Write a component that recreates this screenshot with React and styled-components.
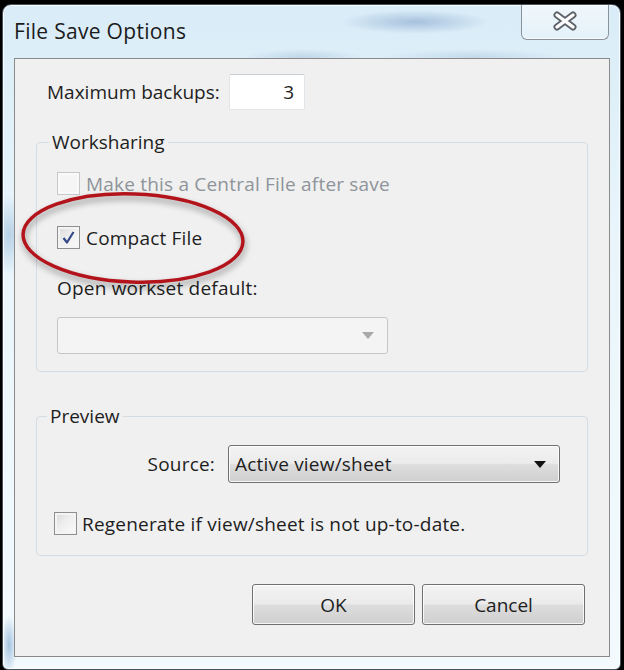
import React from 'react';
import styled, { createGlobalStyle } from 'styled-components';

const GlobalStyle = createGlobalStyle`
  html, body {
    margin: 0;
    padding: 0;
    background: #000;
  }
  body {
    font-family: "Open Sans", "Noto Sans", "DejaVu Sans", sans-serif;
    color: #1e1e1e;
  }
  * {
    box-sizing: border-box;
  }
`;

const Window = styled.div`
  margin: 4px 3px 0 2px;
  height: 666px;
  display: flex;
  flex-direction: column;
  border: 1px solid #46515d;
  border-radius: 9px 9px 6px 6px;
  background:
    radial-gradient(ellipse 75px 12px at 412px 17px, rgba(105, 140, 190, 0.45), transparent),
    radial-gradient(ellipse 60px 8px at 300px 52px, rgba(140, 170, 205, 0.35), transparent),
    radial-gradient(ellipse 90px 8px at 470px 52px, rgba(140, 170, 205, 0.3), transparent),
    radial-gradient(ellipse 18px 40px at 6px 230px, rgba(120, 165, 205, 0.45), transparent),
    radial-gradient(ellipse 8px 30px at 6px 640px, rgba(100, 150, 200, 0.55), transparent),
    linear-gradient(180deg, #d9ecf7 0%, #e9f5fb 35%, #f3fafd 100%);
  box-shadow: inset 0 0 0 1px rgba(255, 255, 255, 0.85);
  overflow: hidden;
`;

const TitleBar = styled.div`
  height: 53px;
  display: flex;
  justify-content: space-between;
  align-items: flex-start;
  padding: 0 11px 0 11px;
`;

const Title = styled.div`
  margin-top: 12px;
  font-size: 21px;
  line-height: 28px;
  letter-spacing: 0.3px;
  color: #1b1b1b;
`;

const CloseButton = styled.div`
  width: 88px;
  height: 36px;
  margin-top: -1px;
  display: flex;
  align-items: center;
  justify-content: center;
  border: 1px solid #8c9299;
  border-top: none;
  border-radius: 0 0 6px 6px;
  background: linear-gradient(180deg, rgba(255, 255, 255, 0.6), rgba(255, 255, 255, 0.25));
  box-shadow: inset 0 -1px 0 rgba(255, 255, 255, 0.7);
  padding-bottom: 2px;
`;

const Client = styled.div`
  position: relative;
  flex: 1;
  margin: 0 10px 12px 11px;
  border: 1px solid #8a8a8a;
  background: #f0f0f0;
  display: flex;
  flex-direction: column;
`;

const Text = styled.span`
  font-size: 19px;
  line-height: 22px;
  letter-spacing: 0.2px;
  white-space: nowrap;
  color: ${(p) => (p.$disabled ? '#8e949a' : '#1e1e1e')};
`;

const BackupsRow = styled.div`
  display: flex;
  align-items: center;
  padding: 15px 0 0 32px;
`;

const BackupsLabel = styled(Text)`
  width: 182px;
  letter-spacing: 0;
`;

const NumberInput = styled.div`
  width: 76px;
  height: 36px;
  padding-right: 10px;
  display: flex;
  align-items: center;
  justify-content: flex-end;
  background: #fff;
  border: 1px solid #e0e5ea;
  border-top-color: #c8ced5;
  border-radius: 2px;
  font-size: 19px;
`;

const Group = styled.fieldset`
  margin: ${(p) => p.$top}px 21px 0 21px;
  padding: 0;
  min-inline-size: 0;
  border: 1px solid #d5dce2;
  border-radius: 4px;
`;

const Legend = styled.legend`
  margin-left: ${(p) => p.$offset}px;
  padding: 0 3px;
  font-size: 19px;
  line-height: 22px;
  color: #1e1e1e;
`;

const GroupBody = styled.div`
  display: flex;
  flex-direction: column;
  align-items: flex-start;
  padding: ${(p) => p.$pad};
`;

const CheckRow = styled.div`
  display: flex;
  align-items: center;
  gap: ${(p) => p.$gap || 6}px;
  height: 23px;
  margin-top: ${(p) => p.$top || 0}px;
  padding-left: ${(p) => p.$indent || 0}px;
`;

const Box = styled.span`
  width: 23px;
  height: 23px;
  flex: none;
  display: flex;
  align-items: center;
  justify-content: center;
  border: 1px solid ${(p) => (p.$disabled ? '#c6c8ca' : '#8f8f8f')};
  background: ${(p) =>
    p.$disabled
      ? '#f5f5f5'
      : 'linear-gradient(135deg, #d9dadb 0%, #eeeeee 45%, #fbfbfb 100%)'};
  box-shadow: inset 0 0 0 2px ${(p) => (p.$disabled ? '#f9f9f9' : '#f4f4f4')};
`;

const FieldLabel = styled(Text)`
  display: block;
  margin-top: ${(p) => p.$top}px;
`;

const Combo = styled.div`
  width: ${(p) => p.$width}px;
  height: ${(p) => p.$height}px;
  margin-top: ${(p) => p.$top || 0}px;
  display: flex;
  align-items: center;
  justify-content: space-between;
  padding: 0 13px 0 6px;
  border-radius: 3px;
  border: 1px solid ${(p) => (p.$disabled ? '#c6c6c6' : '#707070')};
  background: ${(p) =>
    p.$disabled
      ? '#f4f4f4'
      : 'linear-gradient(180deg, #f3f3f3 0%, #ebebeb 48%, #dddddd 52%, #cfcfcf 100%)'};
  box-shadow: ${(p) => (p.$disabled ? 'none' : 'inset 0 0 0 1px rgba(255,255,255,0.8)')};
`;

const Arrow = styled.span`
  width: 0;
  height: 0;
  border-left: 6px solid transparent;
  border-right: 6px solid transparent;
  border-top: 7px solid ${(p) => (p.$disabled ? '#a9a9a9' : '#111')};
`;

const SourceRow = styled.div`
  display: flex;
  align-items: center;
  gap: 13px;
`;

const SourceLabel = styled(Text)`
  width: 178px;
  text-align: right;
`;

const ButtonRow = styled.div`
  display: flex;
  justify-content: flex-end;
  gap: 7px;
  margin: 28px 24px 0 0;
`;

const Button = styled.button`
  width: 163px;
  height: 41px;
  padding: 0;
  font-family: inherit;
  font-size: 19px;
  color: #1e1e1e;
  border: 1px solid #707070;
  border-radius: 3px;
  background: linear-gradient(180deg, #f3f3f3 0%, #ebebeb 48%, #dddddd 52%, #cfcfcf 100%);
  box-shadow: inset 0 0 0 1px rgba(255, 255, 255, 0.8);
`;

const Annotation = styled.svg`
  position: absolute;
  left: 3px;
  top: 122px;
  overflow: visible;
  pointer-events: none;
  filter: drop-shadow(1px 4px 3px rgba(0, 0, 0, 0.4));
`;

const CloseGlyph = () => (
  <svg width="26" height="20" viewBox="0 0 26 20">
    <g strokeLinecap="round" fill="none">
      <path d="M5 4 L21 16 M21 4 L5 16" stroke="#5d626a" strokeWidth="7" />
      <path d="M5 4 L21 16 M21 4 L5 16" stroke="#fdfdfd" strokeWidth="3.4" />
    </g>
  </svg>
);

const CheckMark = () => (
  <svg width="15" height="15" viewBox="0 0 15 15">
    <path
      d="M2.5 8 L6 12.5 L12.5 2"
      fill="none"
      stroke="#354a86"
      strokeWidth="2.2"
      strokeLinejoin="round"
    />
  </svg>
);

const Checkbox = ({ checked, disabled }) => (
  <Box $disabled={disabled}>{checked && <CheckMark />}</Box>
);

const App = () => {
  return (
    <>
      <GlobalStyle />
      <Window>
        <TitleBar>
          <Title>File Save Options</Title>
          <CloseButton>
            <CloseGlyph />
          </CloseButton>
        </TitleBar>
        <Client>
          <BackupsRow>
            <BackupsLabel>Maximum backups:</BackupsLabel>
            <NumberInput>3</NumberInput>
          </BackupsRow>

          <Group $top={21}>
            <Legend $offset={12}>Worksharing</Legend>
            <GroupBody $pad="19px 0 17px 20px">
              <CheckRow>
                <Checkbox disabled />
                <Text $disabled>Make this a Central File after save</Text>
              </CheckRow>
              <CheckRow $top={31}>
                <Checkbox checked />
                <Text>Compact File</Text>
              </CheckRow>
              <FieldLabel $top={28}>Open workset default:</FieldLabel>
              <Combo $disabled $width={331} $height={37} $top={18}>
                <span />
                <Arrow $disabled />
              </Combo>
            </GroupBody>
          </Group>

          <Group $top={33}>
            <Legend $offset={10}>Preview</Legend>
            <GroupBody $pad="18px 0 20px 0">
              <SourceRow>
                <SourceLabel>Source:</SourceLabel>
                <Combo $width={332} $height={38}>
                  <Text>Active view/sheet</Text>
                  <Arrow />
                </Combo>
              </SourceRow>
              <CheckRow $top={29} $gap={5} $indent={17}>
                <Checkbox />
                <Text>Regenerate if view/sheet is not up-to-date.</Text>
              </CheckRow>
            </GroupBody>
          </Group>

          <ButtonRow>
            <Button>OK</Button>
            <Button>Cancel</Button>
          </ButtonRow>

          <Annotation width="260" height="120" viewBox="0 0 260 120">
            <ellipse
              cx="115"
              cy="57"
              rx="110"
              ry="44"
              transform="rotate(2 115 57)"
              fill="none"
              stroke="#b3141c"
              strokeWidth="3.5"
            />
          </Annotation>
        </Client>
      </Window>
    </>
  );
};

export default App;
